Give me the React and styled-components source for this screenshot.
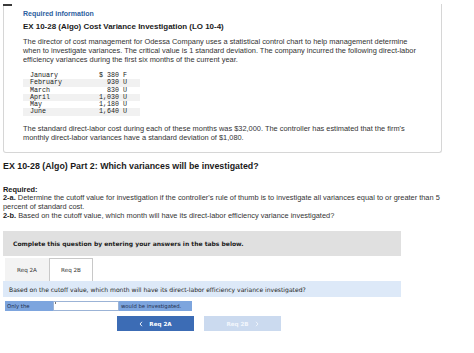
import React from "react";
import styled, { createGlobalStyle } from "styled-components";

const Global = createGlobalStyle`
  html, body { margin: 0; padding: 0; background: #fff; }
  body { font-family: "Liberation Sans", Arial, sans-serif; color: #222; }
`;

const Page = styled.div`
  width: 474px;
  height: 353px;
  overflow: hidden;
  padding: 0 0 0 3px;
  box-sizing: border-box;
`;

const Card = styled.div`
  position: relative;
  width: 439px;
  box-sizing: border-box;
  margin-top: 4px;
  border: 1px solid #d6d6d6;
  border-top: none;
  border-radius: 0 0 3px 3px;
  padding: 4px 23px 10px 19px;
  &::before {
    content: "";
    position: absolute;
    left: -1px;
    top: 0;
    width: 9px;
    height: 2px;
    background: #3a3a3a;
  }
`;

const ReqInfo = styled.div`
  color: #2c5ea0;
  font-weight: bold;
  font-size: 7px;
  line-height: 12px;
`;

const Title = styled.div`
  font-weight: bold;
  font-size: 7.95px;
  line-height: 13px;
  color: #1a1a1a;
`;

const Para = styled.p`
  margin: ${(p) => p.$mt || 0}px 0 0;
  font-size: 7.42px;
  line-height: 9px;
  color: #333;
`;

const Table = styled.div`
  margin-top: 8px;
  width: 117px;
  font-family: "Liberation Mono", "Courier New", monospace;
  font-size: 6.67px;
  line-height: 7.3px;
  color: #222;
`;

const Row = styled.div`
  display: flex;
  padding-left: 7px;
  background: ${(p) => (p.$shade ? "#f1f1f1" : "transparent")};
`;

const Month = styled.span`
  width: 69px;
  white-space: pre;
`;

const Amt = styled.span`
  width: 20px;
  text-align: right;
  white-space: pre;
`;

const Fu = styled.span`
  margin-left: 4px;
`;

const PartTitle = styled.div`
  font-weight: bold;
  font-size: 8.84px;
  line-height: 14px;
  margin-top: 6px;
  color: #1a1a1a;
`;

const Required = styled.div`
  margin-top: 13px;
  font-size: 7.4px;
  line-height: 8.4px;
  color: #333;
  white-space: nowrap;
  b { color: #1a1a1a; }
`;

const Gap = styled.div`
  height: ${(p) => p.$h}px;
`;

const Notice = styled.div`
  margin-top: 11px;
  width: 398px;
  height: 25px;
  background: #e0e0e0;
  display: flex;
  align-items: center;
  padding-left: 10px;
  box-sizing: border-box;
  font-family: "DejaVu Sans", Verdana, sans-serif;
  font-weight: bold;
  font-size: 6.03px;
  color: #222;
`;

const Tabs = styled.div`
  display: flex;
  margin-top: 2px;
  padding-left: 2px;
  height: 23px;
`;

const Tab = styled.div`
  width: 44px;
  display: flex;
  align-items: center;
  justify-content: center;
  box-sizing: border-box;
  font-family: "DejaVu Sans", Verdana, sans-serif;
  font-size: 5.65px;
  color: #333;
  background: ${(p) => (p.$active ? "#fff" : "#f3f3f3")};
  border: 1px solid ${(p) => (p.$active ? "#c8c8c8" : "#f3f3f3")};
  border-bottom: none;
`;

const QBar = styled.div`
  width: 398px;
  height: 16px;
  box-sizing: border-box;
  background: #dde9f8;
  display: flex;
  align-items: center;
  padding-left: 6px;
  font-family: "DejaVu Sans", Verdana, sans-serif;
  font-size: 6.05px;
  color: #222;
`;

const AnswerRow = styled.div`
  display: flex;
  margin: 4px 0 0 2px;
  height: 10px;
  font-family: "DejaVu Sans", Verdana, sans-serif;
  font-size: 5.3px;
  color: #1d2f4f;
`;

const Label = styled.div`
  width: ${(p) => p.$w}px;
  background: #7da5de;
  display: flex;
  align-items: center;
  padding-left: 2px;
  box-sizing: border-box;
`;

const Input = styled.div`
  width: 66px;
  background: #fff;
  border: 1px solid #9bb3d6;
  box-sizing: border-box;
  position: relative;
  &::before {
    content: "";
    position: absolute;
    left: 1px;
    top: 0;
    width: 1px;
    height: 2px;
    background: #777;
  }
`;

const Nav = styled.div`
  display: flex;
  gap: 10px;
  margin: 5px 0 0 114px;
`;

const NavBtn = styled.div`
  width: 77px;
  height: 15px;
  background: ${(p) => (p.$disabled ? "#cbdaef" : "#3c6cb5")};
  color: ${(p) => (p.$disabled ? "#f2f6fc" : "#fff")};
  display: flex;
  align-items: center;
  justify-content: center;
  gap: 6px;
  font-family: "DejaVu Sans", Verdana, sans-serif;
  font-weight: bold;
  font-size: 5.6px;
`;

const Chev = ({ dir }) => (
  <svg width="4" height="6" viewBox="0 0 4 6">
    <path
      d={dir === "left" ? "M3 0.8 L1 3 L3 5.2" : "M1 0.8 L3 3 L1 5.2"}
      fill="none"
      stroke="currentColor"
      strokeWidth="0.9"
    />
  </svg>
);

const data = [
  ["January", "$ 380", "F"],
  ["February", "930", "U"],
  ["March", "830", "U"],
  ["April", "1,030", "U"],
  ["May", "1,180", "U"],
  ["June", "1,640", "U"],
];

export default function App() {
  return (
    <Page>
      <Global />
      <Card>
        <ReqInfo>Required information</ReqInfo>
        <Title>EX 10-28 (Algo) Cost Variance Investigation (LO 10-4)</Title>
        <Para $mt={4}>
          The director of cost management for Odessa Company uses a statistical control chart to help management determine
          when to investigate variances. The critical value is 1 standard deviation. The company incurred the following direct-labor
          efficiency variances during the first six months of the current year.
        </Para>
        <Table>
          {data.map(([m, a, f], i) => (
            <Row key={m} $shade={i % 2 === 1}>
              <Month>{m}</Month>
              <Amt>{a}</Amt>
              <Fu>{f}</Fu>
            </Row>
          ))}
        </Table>
        <Para $mt={8}>
          The standard direct-labor cost during each of these months was $32,000. The controller has estimated that the firm's
          monthly direct-labor variances have a standard deviation of $1,080.
        </Para>
      </Card>
      <PartTitle>EX 10-28 (Algo) Part 2: Which variances will be investigated?</PartTitle>
      <Required>
        <b>Required:</b>
        <br />
        <b>2-a.</b> Determine the cutoff value for investigation if the controller's rule of thumb is to investigate all variances equal to or greater than 5
        <br />
        percent of standard cost.
        <Gap $h={1} />
        <b>2-b.</b> Based on the cutoff value, which month will have its direct-labor efficiency variance investigated?
      </Required>
      <Notice>Complete this question by entering your answers in the tabs below.</Notice>
      <Tabs>
        <Tab>Req 2A</Tab>
        <Tab $active>Req 2B</Tab>
      </Tabs>
      <QBar>Based on the cutoff value, which month will have its direct-labor efficiency variance investigated?</QBar>
      <AnswerRow>
        <Label $w={48}>Only the</Label>
        <Input />
        <Label $w={73}>would be investigated.</Label>
      </AnswerRow>
      <Nav>
        <NavBtn>
          <Chev dir="left" />
          Req 2A
        </NavBtn>
        <NavBtn $disabled>
          Req 2B
          <Chev dir="right" />
        </NavBtn>
      </Nav>
    </Page>
  );
}
